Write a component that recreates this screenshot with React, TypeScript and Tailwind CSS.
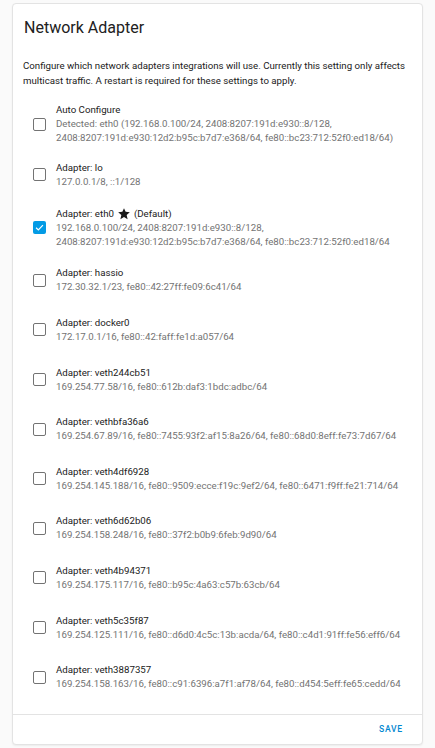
import React, { useState } from 'react';

// 네트워크 어댑터 설정 카드
type Adapter = {
  id: string;
  title: string;
  lines: string[];
  isDefault?: boolean;
};

const adapters: Adapter[] = [
  {
    id: 'auto',
    title: 'Auto Configure',
    lines: [
      'Detected: eth0 (192.168.0.100/24, 2408:8207:191d:e930::8/128,',
      '2408:8207:191d:e930:12d2:b95c:b7d7:e368/64, fe80::bc23:712:52f0:ed18/64)',
    ],
  },
  { id: 'lo', title: 'Adapter: lo', lines: ['127.0.0.1/8, ::1/128'] },
  {
    id: 'eth0',
    title: 'Adapter: eth0',
    isDefault: true,
    lines: [
      '192.168.0.100/24, 2408:8207:191d:e930::8/128,',
      '2408:8207:191d:e930:12d2:b95c:b7d7:e368/64, fe80::bc23:712:52f0:ed18/64',
    ],
  },
  { id: 'hassio', title: 'Adapter: hassio', lines: ['172.30.32.1/23, fe80::42:27ff:fe09:6c41/64'] },
  { id: 'docker0', title: 'Adapter: docker0', lines: ['172.17.0.1/16, fe80::42:faff:fe1d:a057/64'] },
  { id: 'veth244cb51', title: 'Adapter: veth244cb51', lines: ['169.254.77.58/16, fe80::612b:daf3:1bdc:adbc/64'] },
  {
    id: 'vethbfa36a6',
    title: 'Adapter: vethbfa36a6',
    lines: ['169.254.67.89/16, fe80::7455:93f2:af15:8a26/64, fe80::68d0:8eff:fe73:7d67/64'],
  },
  {
    id: 'veth4df6928',
    title: 'Adapter: veth4df6928',
    lines: ['169.254.145.188/16, fe80::9509:ecce:f19c:9ef2/64, fe80::6471:f9ff:fe21:714/64'],
  },
  { id: 'veth6d62b06', title: 'Adapter: veth6d62b06', lines: ['169.254.158.248/16, fe80::37f2:b0b9:6feb:9d90/64'] },
  { id: 'veth4b94371', title: 'Adapter: veth4b94371', lines: ['169.254.175.117/16, fe80::b95c:4a63:c57b:63cb/64'] },
  {
    id: 'veth5c35f87',
    title: 'Adapter: veth5c35f87',
    lines: ['169.254.125.111/16, fe80::d6d0:4c5c:13b:acda/64, fe80::c4d1:91ff:fe56:eff6/64'],
  },
  {
    id: 'veth3887357',
    title: 'Adapter: veth3887357',
    lines: ['169.254.158.163/16, fe80::c91:6396:a7f1:af78/64, fe80::d454:5eff:fe65:cedd/64'],
  },
];

const StarIcon = () => (
  <svg viewBox="0 0 24 24" className="mx-[3px] h-[14px] w-[14px] fill-[#1a1a1a]">
    <path d="M12,17.27L18.18,21L16.54,13.64L22,8.91L14.81,8.29L12,2L9.19,8.29L2,8.91L7.45,13.64L5.82,21L12,17.27Z" />
  </svg>
);

const Checkbox = ({ checked, onToggle }: { checked: boolean; onToggle: () => void }) => (
  <button
    onClick={onToggle}
    className={
      checked
        ? 'flex h-[13px] w-[13px] shrink-0 items-center justify-center rounded-[2px] bg-[#039be5]'
        : 'flex h-[13px] w-[13px] shrink-0 items-center justify-center rounded-[2px] border-[1.5px] border-[#737373] bg-white'
    }
  >
    {checked && (
      <svg viewBox="0 0 24 24" className="h-[11px] w-[11px]">
        <path d="M4.5 12.5l5 5L19.5 7" fill="none" stroke="white" strokeWidth="2.6" />
      </svg>
    )}
  </button>
);

const App: React.FC = () => {
  const [selected, setSelected] = useState<string[]>(['eth0']);

  const toggle = (id: string) => {
    setSelected((prev) => (prev.includes(id) ? prev.filter((x) => x !== id) : [...prev, id]));
  };

  return (
    <div className="min-h-screen bg-[#fafafa] px-3 pt-[3px] font-['Roboto',sans-serif]">
      <div className="rounded-[4px] border border-[#e3e3e3] bg-white shadow-[0_1px_2px_rgba(0,0,0,0.06)]">
        <h1 className="px-[11px] pt-[12px] text-[16px] leading-6 font-normal text-[#212121]">Network Adapter</h1>

        <p className="mt-[19px] px-[10px] text-[9.7px] leading-[14.5px] text-[#212121]">
          Configure which network adapters integrations will use. Currently this setting only affects multicast
          traffic. A restart is required for these settings to apply.
        </p>

        {/* 어댑터 목록 */}
        <div className="mt-[10px] pb-[12px]">
          {adapters.map((a) => (
            <div
              key={a.id}
              className={
                a.lines.length > 1
                  ? a.id === 'auto'
                    ? 'flex h-[52px] items-center pl-[20px]'
                    : 'flex h-[56px] items-center pl-[20px]'
                  : 'flex h-[49.6px] items-center pl-[20px]'
              }
            >
              <Checkbox checked={selected.includes(a.id)} onToggle={() => toggle(a.id)} />
              <div className="ml-[10px] text-[9.7px] leading-[14px]">
                <div className="flex items-center text-[#212121]">
                  {a.title}
                  {a.isDefault && (
                    <>
                      <StarIcon />
                      (Default)
                    </>
                  )}
                </div>
                {a.lines.map((line) => (
                  <div key={line} className="whitespace-nowrap text-[#737373]">
                    {line}
                  </div>
                ))}
              </div>
            </div>
          ))}
        </div>

        <div className="flex h-[30px] items-center justify-end border-t border-[#e3e3e3] pr-[19px]">
          <button className="text-[8.6px] font-medium tracking-[0.09em] text-[#0288d1]">SAVE</button>
        </div>
      </div>
    </div>
  );
};

export default App;
